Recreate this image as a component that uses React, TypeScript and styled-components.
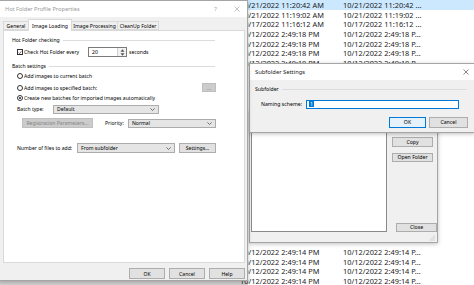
import React from 'react'
import styled, { createGlobalStyle } from 'styled-components'

const GlobalStyle = createGlobalStyle`
  html, body {
    margin: 0;
    padding: 0;
    overflow: hidden;
    background: #fff;
  }
  body {
    font-family: "Segoe UI", "Noto Sans", sans-serif;
  }
`

const topRows = [
  ['10/21/2022 11:20:42 AM', '10/21/2022 11:20:42 ...'],
  ['10/21/2022 11:19:02 AM', '10/21/2022 11:19:02 ...'],
  ['10/17/2022 11:16:12 AM', '10/17/2022 11:16:12 ...'],
  ['10/12/2022 2:49:18 PM', '10/12/2022 2:49:18 P...'],
  ['10/12/2022 2:49:18 PM', '10/12/2022 2:49:18 P...'],
  ['10/12/2022 2:49:18 PM', '10/12/2022 2:49:18 P...'],
  ['10/12/2022 2:49:18 PM', '10/12/2022 2:49:18 P...'],
]

const bottomRows = [0, 1, 2, 3].map(() => ['10/12/2022 2:49:14 PM', '10/12/2022 2:49:14 P...'])

const Chevron = () => (
  <svg width="5" height="3" viewBox="0 0 5 3">
    <polyline points="0.4,0.4 2.5,2.5 4.6,0.4" fill="none" stroke="#444" strokeWidth="0.7" />
  </svg>
)

const CloseIcon = ({ color }: { color: string }) => (
  <svg width="6" height="6" viewBox="0 0 6 6">
    <line x1="0.5" y1="0.5" x2="5.5" y2="5.5" stroke={color} strokeWidth="0.6" />
    <line x1="5.5" y1="0.5" x2="0.5" y2="5.5" stroke={color} strokeWidth="0.6" />
  </svg>
)

const App = () => {
  return (
    <Desktop>
      <GlobalStyle />
      <ListView>
        <RowGroup>
          {topRows.map((r, i) => (
            <ListRow key={i} $h={9.7} $selected={i === 0}>
              <NameCell />
              <Cell>{r[0]}</Cell>
              <Cell>{r[1]}</Cell>
            </ListRow>
          ))}
        </RowGroup>
        <RowGroup $bottom>
          {bottomRows.map((r, i) => (
            <ListRow key={i} $h={9.5}>
              <NameCell $shade={i === bottomRows.length - 1} />
              <Cell>{r[0]}</Cell>
              <Cell>{r[1]}</Cell>
            </ListRow>
          ))}
        </RowGroup>
      </ListView>

      {/* hot folder dialog */}
      <Window $x={-1} $y={0} $w={249} $h={281} $z={3} $fs={5.1}>
        <TitleBar>
          <TitleText $inactive $fs={5.6}>Hot Folder Profile Properties</TitleText>
          <CaptionButtons>
            <CaptionButton $w={21}>?</CaptionButton>
            <CaptionButton $w={21}><CloseIcon color="#9a9a9a" /></CaptionButton>
          </CaptionButtons>
        </TitleBar>
        <DialogBody>
          <TabStrip>
            <Tab $w={26}>General</Tab>
            <Tab $w={44} $active>Image Loading</Tab>
            <Tab $w={47}>Image Processing</Tab>
            <Tab $w={42}>CleanUp Folder</Tab>
          </TabStrip>
          <TabPanel>
            <GroupHeader $w={203} $mt={0}>Hot Folder checking</GroupHeader>
            <FieldRow $h={10} $mt={3}>
              <CheckBox>
                <svg width="5" height="5" viewBox="0 0 5 5">
                  <polyline points="0.7,2.6 2,3.9 4.3,1" fill="none" stroke="#222" strokeWidth="0.8" />
                </svg>
              </CheckBox>
              <Label $w={64} $ml={1}>Check Hot Folder every</Label>
              <SpinBox>
                <span>20</span>
                <SpinArrows>
                  <svg width="5" height="3" viewBox="0 0 5 3"><polygon points="2.5,0.3 4.5,2.7 0.5,2.7" fill="#555" /></svg>
                  <svg width="5" height="3" viewBox="0 0 5 3"><polygon points="0.5,0.3 4.5,0.3 2.5,2.7" fill="#555" /></svg>
                </SpinArrows>
              </SpinBox>
              <Label $ml={2}>seconds</Label>
            </FieldRow>

            <GroupHeader $w={203} $mt={5}>Batch settings</GroupHeader>
            <FieldRow $h={8} $mt={2}>
              <Radio />
              <Label $ml={1}>Add images to current batch</Label>
            </FieldRow>
            <FieldRow $h={9} $mt={3}>
              <Radio />
              <Label $ml={1}>Add images to specified batch:</Label>
              <PushButton $w={14} $h={9} $disabled $push>...</PushButton>
            </FieldRow>
            <FieldRow $h={8} $mt={2}>
              <Radio $checked />
              <Label $ml={1}>Create new batches for imported images automatically</Label>
            </FieldRow>
            <FieldRow $h={9} $mt={2.5}>
              <Label $w={36}>Batch type:</Label>
              <Combo $w={106} $h={9}>
                <span>Default</span>
                <Chevron />
              </Combo>
            </FieldRow>
            <FieldRow $h={10} $mt={4.5} $indent={10}>
              <PushButton $w={71} $h={10} $disabled>Registration Parameters...</PushButton>
              <Label $w={23} $ml={12}>Priority:</Label>
              <Combo $w={88} $h={9}>
                <span>Normal</span>
                <Chevron />
              </Combo>
            </FieldRow>
            <FieldRow $h={10} $mt={15}>
              <Label $w={60}>Number of files to add:</Label>
              <Combo $w={98} $h={10}>
                <span>From subfolder</span>
                <Chevron />
              </Combo>
              <PushButton $w={37} $h={10} $ml={4}>Settings...</PushButton>
            </FieldRow>
          </TabPanel>
          <ButtonRow>
            <PushButton $w={36} $h={11}>OK</PushButton>
            <PushButton $w={36} $h={11}>Cancel</PushButton>
            <PushButton $w={36} $h={11}>Help</PushButton>
          </ButtonRow>
        </DialogBody>
      </Window>

      {/* output window behind the subfolder dialog */}
      <Window $x={249} $y={110} $w={189} $h={133} $z={1} $fs={5.2}>
        <OutputBody>
          <ListBox />
          <SidePanel>
            <PushButton $w={41} $h={9.5}>Copy</PushButton>
            <PushButton $w={41} $h={9.5} $mt={6}>Open Folder</PushButton>
            <PushButton $w={41} $h={9.5} $push>Close</PushButton>
          </SidePanel>
        </OutputBody>
        <Grip>
          <svg width="6" height="6" viewBox="0 0 6 6" fill="#b5b5b5">
            <rect x="4.5" y="0.5" width="1" height="1" />
            <rect x="2.5" y="2.5" width="1" height="1" />
            <rect x="4.5" y="2.5" width="1" height="1" />
            <rect x="0.5" y="4.5" width="1" height="1" />
            <rect x="2.5" y="4.5" width="1" height="1" />
            <rect x="4.5" y="4.5" width="1" height="1" />
          </svg>
        </Grip>
      </Window>

      {/* subfolder settings dialog */}
      <Window $x={249} $y={63} $w={226} $h={70} $z={2} $fs={5.2}>
        <TitleBar>
          <TitleText $pl={5} $fs={5.8}>Subfolder Settings</TitleText>
          <CaptionButtons>
            <CaptionButton $w={16}><CloseIcon color="#333" /></CaptionButton>
          </CaptionButtons>
        </TitleBar>
        <SubBody>
          <GroupHeader $w={212} $mt={0}>Subfolder</GroupHeader>
          <FieldRow $h={9.5} $mt={6.5} $indent={6}>
            <Label $w={45}>Naming scheme:</Label>
            <TextInput>
              <Selection>1</Selection>
            </TextInput>
          </FieldRow>
          <SubButtons>
            <PushButton $w={37} $h={11} $default>OK</PushButton>
            <PushButton $w={39} $h={11}>Cancel</PushButton>
          </SubButtons>
        </SubBody>
      </Window>
    </Desktop>
  )
}

export default App

const Desktop = styled.div`
  position: relative;
  width: 474px;
  height: 285px;
  overflow: hidden;
  background: #fff;
`

const ListView = styled.div`
  display: flex;
  flex-direction: column;
  height: 100%;
  font-size: 7.4px;
  color: #1b1b1b;
`

const RowGroup = styled.div<{ $bottom?: boolean }>`
  display: flex;
  flex-direction: column;
  margin-top: ${p => (p.$bottom ? 'auto' : '0')};
`

const ListRow = styled.div<{ $h: number; $selected?: boolean }>`
  display: grid;
  grid-template-columns: 240px 103px 1fr;
  align-items: stretch;
  height: ${p => p.$h}px;
  background: ${p => (p.$selected ? '#cce8ff' : 'transparent')};
  white-space: nowrap;
`

const NameCell = styled.span<{ $shade?: boolean }>`
  background: ${p => (p.$shade ? '#d0d0d0' : 'transparent')};
  margin-right: ${p => (p.$shade ? -8 : 0)}px;
`

const Cell = styled.span`
  display: flex;
  align-items: center;
`

const Window = styled.div<{ $x: number; $y: number; $w: number; $h: number; $z: number; $fs: number }>`
  position: absolute;
  left: ${p => p.$x}px;
  top: ${p => p.$y}px;
  width: ${p => p.$w}px;
  height: ${p => p.$h}px;
  z-index: ${p => p.$z};
  box-sizing: border-box;
  display: flex;
  flex-direction: column;
  background: #f0f0f0;
  border: 1px solid #a5a5a5;
  box-shadow: 0 1px 4px rgba(0, 0, 0, 0.25);
  font-size: ${p => p.$fs}px;
  color: #000;
`

const TitleBar = styled.div`
  display: flex;
  align-items: center;
  height: 16px;
  flex-shrink: 0;
  background: #fff;
`

const TitleText = styled.div<{ $inactive?: boolean; $pl?: number; $fs: number }>`
  padding-left: ${p => p.$pl ?? 5}px;
  font-size: ${p => p.$fs}px;
  color: ${p => (p.$inactive ? '#9a9a9a' : '#1a1a1a')};
`

const CaptionButtons = styled.div`
  display: flex;
  margin-left: auto;
  height: 100%;
`

const CaptionButton = styled.div<{ $w: number }>`
  width: ${p => p.$w}px;
  display: flex;
  align-items: center;
  justify-content: center;
  color: #9a9a9a;
  font-size: 6px;
`

const DialogBody = styled.div`
  display: flex;
  flex-direction: column;
  padding: 2px 2px 0 3px;
`

const TabStrip = styled.div`
  display: flex;
  align-items: flex-end;
  height: 11px;
`

const Tab = styled.div<{ $w: number; $active?: boolean }>`
  box-sizing: border-box;
  width: ${p => p.$w}px;
  height: ${p => (p.$active ? 12 : 9)}px;
  margin-left: -1px;
  margin-bottom: ${p => (p.$active ? -1 : 0)}px;
  display: flex;
  align-items: center;
  justify-content: center;
  border: 1px solid #d9d9d9;
  border-bottom: ${p => (p.$active ? 'none' : '1px solid #d9d9d9')};
  background: ${p => (p.$active ? '#fff' : '#f0f0f0')};
  position: relative;
  z-index: ${p => (p.$active ? 1 : 0)};
  white-space: nowrap;
  &:first-child {
    margin-left: 0;
  }
`

const TabPanel = styled.div`
  box-sizing: border-box;
  height: 233px;
  display: flex;
  flex-direction: column;
  padding: 5px 0 0 8px;
  background: #fff;
  border: 1px solid #d9d9d9;
`

const GroupHeader = styled.div<{ $w: number; $mt: number }>`
  display: flex;
  align-items: center;
  gap: 3px;
  width: ${p => p.$w}px;
  height: 8px;
  margin-top: ${p => p.$mt}px;
  white-space: nowrap;
  &::after {
    content: '';
    flex: 1;
    height: 1px;
    background: #dcdcdc;
  }
`

const FieldRow = styled.div<{ $h: number; $mt: number; $indent?: number }>`
  display: flex;
  align-items: center;
  width: 204px;
  box-sizing: border-box;
  height: ${p => p.$h}px;
  margin-top: ${p => p.$mt}px;
  padding-left: ${p => p.$indent ?? 5}px;
  white-space: nowrap;
`

const Label = styled.span<{ $w?: number; $ml?: number }>`
  width: ${p => (p.$w ? `${p.$w}px` : 'auto')};
  flex-shrink: 0;
  margin-left: ${p => p.$ml ?? 0}px;
  white-space: nowrap;
`

const CheckBox = styled.span`
  box-sizing: border-box;
  width: 6px;
  height: 6px;
  border: 1px solid #333;
  background: #fff;
  display: flex;
  align-items: center;
  justify-content: center;
  flex-shrink: 0;
`

const Radio = styled.span<{ $checked?: boolean }>`
  box-sizing: border-box;
  width: 6px;
  height: 6px;
  border: 1px solid #333;
  border-radius: 50%;
  background: #fff;
  display: flex;
  align-items: center;
  justify-content: center;
  flex-shrink: 0;
  &::after {
    content: '';
    width: 2.5px;
    height: 2.5px;
    border-radius: 50%;
    background: ${p => (p.$checked ? '#222' : 'transparent')};
  }
`

const SpinBox = styled.div`
  box-sizing: border-box;
  width: 39px;
  height: 10px;
  display: flex;
  align-items: center;
  padding-left: 3px;
  border: 1px solid #7a7a7a;
  background: #fff;
  flex-shrink: 0;
`

const SpinArrows = styled.div`
  margin-left: auto;
  width: 8px;
  height: 100%;
  display: flex;
  flex-direction: column;
  align-items: center;
  justify-content: space-around;
  border-left: 1px solid #d0d0d0;
  background: #f3f3f3;
`

const PushButton = styled.div<{
  $w: number
  $h: number
  $ml?: number
  $mt?: number
  $disabled?: boolean
  $default?: boolean
  $push?: boolean
}>`
  box-sizing: border-box;
  width: ${p => p.$w}px;
  height: ${p => p.$h}px;
  flex-shrink: 0;
  margin-left: ${p => (p.$push ? 'auto' : `${p.$ml ?? 0}px`)};
  margin-top: ${p => (p.$push ? 'auto' : `${p.$mt ?? 0}px`)};
  display: flex;
  align-items: center;
  justify-content: center;
  white-space: nowrap;
  background: ${p => (p.$disabled ? '#cccccc' : p.$default ? '#e5f1fb' : '#e1e1e1')};
  border: 1px solid ${p => (p.$disabled ? '#bfbfbf' : p.$default ? '#0078d7' : '#adadad')};
  color: ${p => (p.$disabled ? '#838383' : '#000')};
`

const Combo = styled.div<{ $w: number; $h: number }>`
  box-sizing: border-box;
  width: ${p => p.$w}px;
  height: ${p => p.$h}px;
  flex-shrink: 0;
  display: flex;
  align-items: center;
  justify-content: space-between;
  padding: 0 3px 0 3px;
  background: #e5e5e5;
  border: 1px solid #acacac;
`

const ButtonRow = styled.div`
  display: flex;
  justify-content: flex-end;
  gap: 4px;
  margin-top: 5px;
`

const SubBody = styled.div`
  display: flex;
  flex-direction: column;
  padding: 5px 0 0 5px;
`

const TextInput = styled.div`
  box-sizing: border-box;
  width: 162px;
  height: 9.5px;
  display: flex;
  align-items: center;
  padding-left: 2px;
  background: #fff;
  border: 1px solid #0078d7;
`

const Selection = styled.span`
  background: #0078d7;
  color: #fff;
  padding: 0 1px;
  line-height: 6px;
`

const SubButtons = styled.div`
  display: flex;
  justify-content: flex-end;
  gap: 3px;
  width: 213px;
  margin-top: 7.5px;
`

const OutputBody = styled.div`
  display: flex;
  flex: 1;
  padding: 0 0 10px 1px;
`

const ListBox = styled.div`
  flex: 1;
  box-sizing: border-box;
  background: #fff;
  border: 1px solid #8a8a8a;
`

const SidePanel = styled.div`
  width: 50px;
  display: flex;
  flex-direction: column;
  box-sizing: border-box;
  padding: 26px 0 0 5px;
`

const Grip = styled.div`
  position: absolute;
  right: 2px;
  bottom: 1px;
  display: flex;
`
